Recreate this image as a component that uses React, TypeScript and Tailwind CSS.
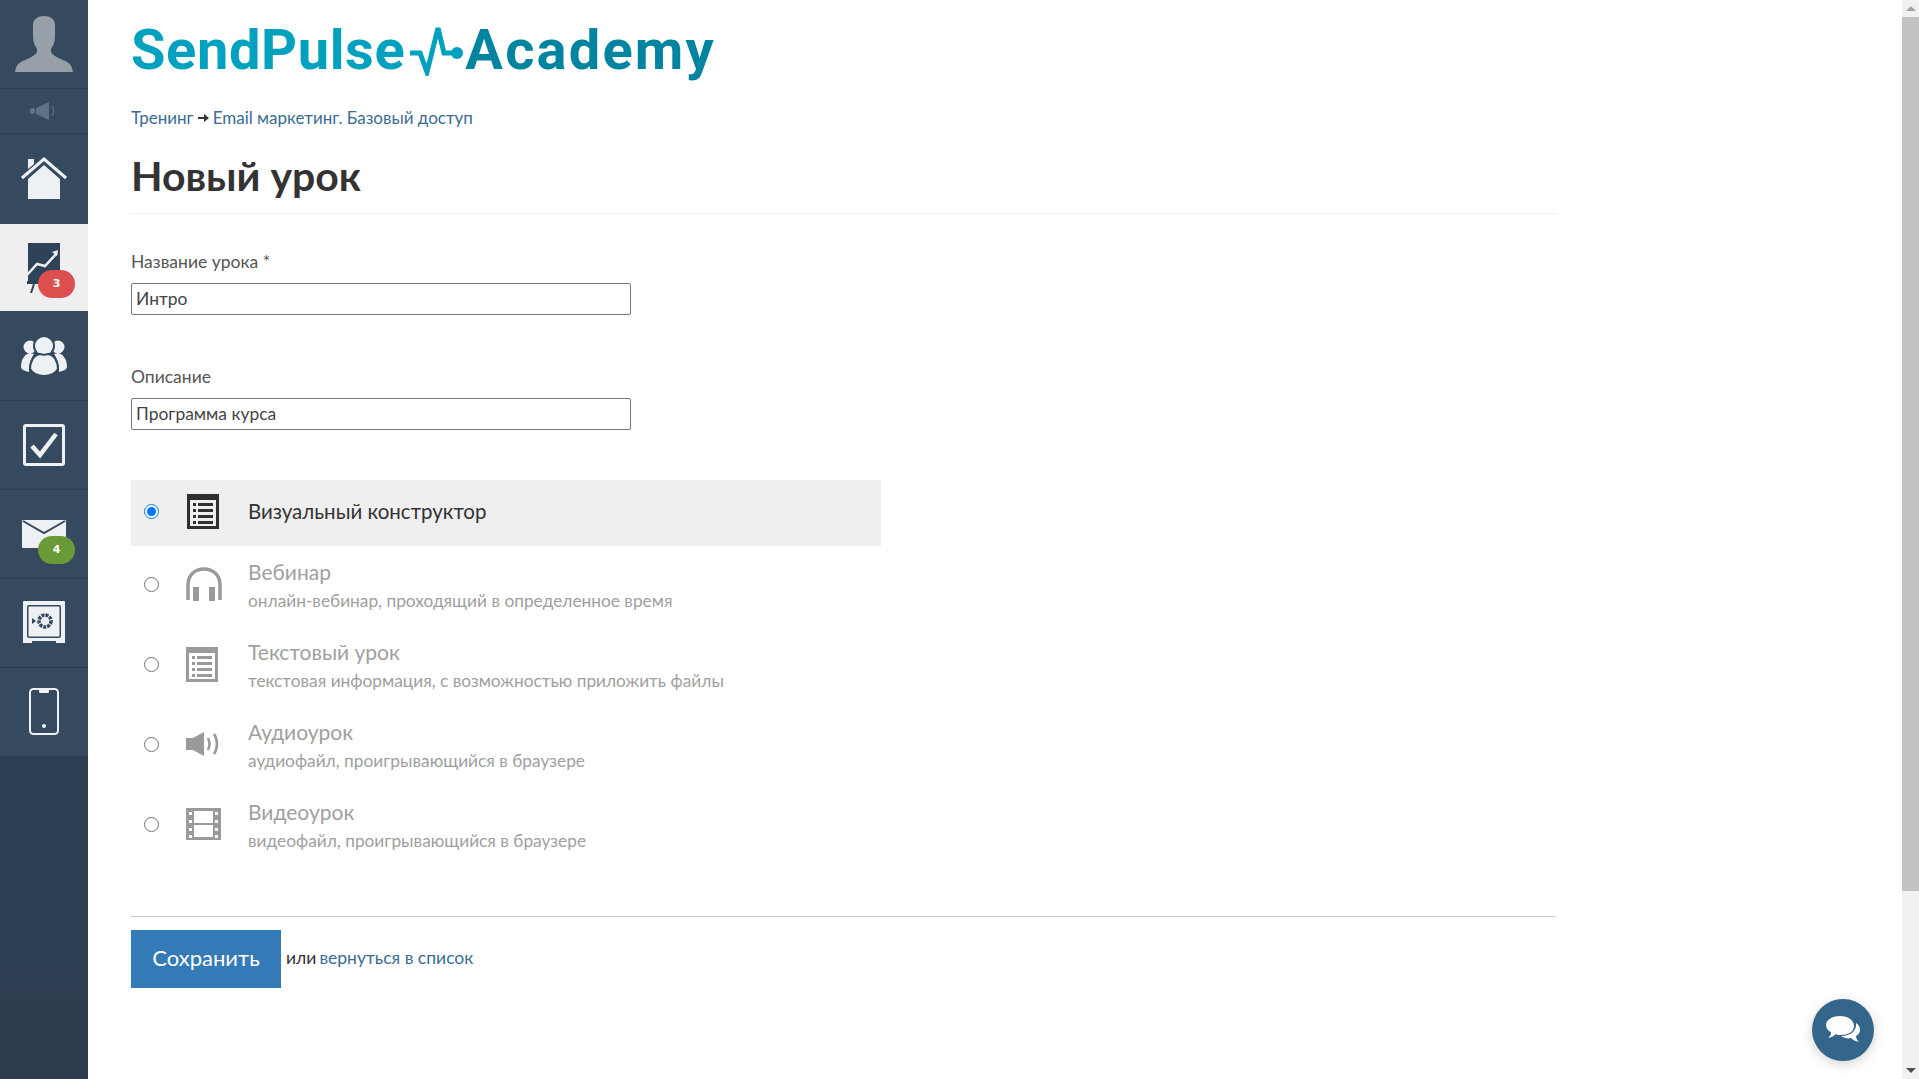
import type { ReactNode } from "react";

const FONT = "font-['Lato','Noto_Sans','Liberation_Sans',sans-serif]";

function Avatar() {
  return (
    <svg width="58" height="56" viewBox="0 0 58 56" fill="#97a0a9">
      <path d="M18 9C18 3 23 0 29 0s11 3 11 9v12c0 5-2 9-4 12v3c2 4 8 6 14 9 5 2 7 5 8 11H0c1-6 3-9 8-11 6-3 12-5 14-9v-3c-2-3-4-7-4-12z" />
    </svg>
  );
}

function Speaker() {
  return (
    <svg width="28" height="18" viewBox="0 0 28 18" fill="#5d7287">
      <rect x="0" y="6" width="5" height="6" rx="2" />
      <path d="M6 6 19 0v18L6 12z" />
      <path d="M22 4c2 3 2 7 0 10" fill="none" stroke="#5d7287" strokeWidth="1.2" />
    </svg>
  );
}

function Home() {
  return (
    <svg width="46" height="42" viewBox="0 0 46 42" fill="#eef1f3">
      <path d="M7 2h6v5L7 12z" />
      <path d="M1 21 23 2l22 19" fill="none" stroke="#eef1f3" strokeWidth="3" />
      <path d="M7 22 23 8l16 14v20H7z" />
    </svg>
  );
}

function Board() {
  return (
    <svg width="34" height="50" viewBox="0 0 34 50">
      <rect x="1" y="0" width="32" height="38" fill="#2f4358" />
      <path d="M0 32 10 21l8 2L30 10" fill="none" stroke="#eef1f3" strokeWidth="2.5" />
      <path d="M25 9l6-2-1 6z" fill="#eef1f3" />
      <rect x="0" y="38" width="34" height="3" fill="#2f4358" />
      <path d="M7 41 4 50M18 41v8" stroke="#2f4358" strokeWidth="2" />
    </svg>
  );
}

function Users() {
  return (
    <svg width="46" height="40" viewBox="0 0 46 40" fill="#eef1f3">
      <circle cx="9" cy="11" r="6.5" />
      <circle cx="37" cy="11" r="6.5" />
      <path d="M0 31c0-8 4-13 9-14l4 1c-3 4-5 10-5 18-5-1-8-3-8-5zM46 31c0-8-4-13-9-14l-4 1c3 4 5 10 5 18 5-1 8-3 8-5z" />
      <circle cx="23" cy="10" r="10" stroke="#35495f" strokeWidth="2" />
      <path d="M9 33c0-8 4-14 10-15 3 1 5 1 8 0 6 1 10 7 10 15-3 5-9 7-14 7s-11-2-14-7z" stroke="#35495f" strokeWidth="2" />
    </svg>
  );
}

function CheckBox() {
  return (
    <svg width="42" height="42" viewBox="0 0 42 42" fill="none">
      <rect x="1.5" y="1.5" width="39" height="39" rx="1.5" stroke="#eef1f3" strokeWidth="3" />
      <path d="M9 22l8 9L33 10" stroke="#eef1f3" strokeWidth="4.5" />
    </svg>
  );
}

function Mail() {
  return (
    <svg width="44" height="28" viewBox="0 0 44 28">
      <rect x="0" y="0" width="44" height="28" rx="1" fill="#eef1f3" />
      <path d="M1 1l21 12L43 1" fill="none" stroke="#34495e" strokeWidth="2" />
    </svg>
  );
}

function Safe() {
  return (
    <svg width="42" height="44" viewBox="0 0 42 44" fill="none">
      <path d="M1 0h40a1 1 0 0 1 1 1v41H33v-2H9v2H0V1a1 1 0 0 1 1-1z" fill="#eef1f3" />
      <rect x="4" y="4" width="34" height="33" rx="2" fill="#34495e" />
      <rect x="5" y="5" width="32" height="31" rx="1.5" fill="#eef1f3" stroke="#34495e" />
      <circle cx="22" cy="20" r="6" stroke="#34495e" strokeWidth="3.5" strokeDasharray="3 1" />
      <path d="M9 17l4 3-4 3z" fill="#34495e" />
    </svg>
  );
}

function Phone() {
  return (
    <svg width="30" height="47" viewBox="0 0 30 47" fill="none">
      <rect x="1" y="1" width="28" height="45" rx="3.5" stroke="#eef1f3" strokeWidth="2" />
      <rect x="10" y="1" width="10" height="4" rx="1" fill="#eef1f3" />
      <circle cx="15" cy="38" r="2" fill="#eef1f3" />
    </svg>
  );
}

function ListIcon({ color, dark }: { color: string; dark?: boolean }) {
  const bg = dark ? "#efefef" : "#ffffff";
  const rows = [9, 15, 21, 27];
  return (
    <svg width="32" height="35" viewBox="0 0 32 35">
      <rect width="32" height="35" fill={color} />
      <rect x="3" y="6" width="26" height="26" fill={bg} />
      {rows.map((y) => (
        <g key={y} fill={color}>
          <rect x="6" y={y} width="3" height="3" />
          <rect x="11" y={y} width="15" height="3" />
        </g>
      ))}
    </svg>
  );
}

function Headphones() {
  return (
    <svg width="36" height="35" viewBox="0 0 36 35" fill="#9a9a9a">
      <path d="M2 33V18C2 8 9 2 18 2s16 6 16 16v15" fill="none" stroke="#9a9a9a" strokeWidth="3.5" />
      <rect x="7" y="20" width="6" height="14" />
      <rect x="23" y="20" width="6" height="14" />
    </svg>
  );
}

function Sound() {
  return (
    <svg width="34" height="24" viewBox="0 0 34 24" fill="#9a9a9a">
      <path d="M0 6h7l11-6v24L7 18H0z" />
      <path d="M22 6c2 4 2 8 0 12" fill="none" stroke="#9a9a9a" strokeWidth="2.6" />
      <path d="M28 2c4 6 4 14 0 20" fill="none" stroke="#9a9a9a" strokeWidth="2.6" />
    </svg>
  );
}

function Film() {
  const holes = [4, 12, 20, 27];
  return (
    <svg width="35" height="32" viewBox="0 0 35 32">
      <rect width="35" height="32" fill="#9a9a9a" />
      <rect x="8" y="3" width="19" height="12" fill="#fff" />
      <rect x="8" y="17" width="19" height="12" fill="#fff" />
      {holes.map((y) => (
        <g key={y} fill="#fff">
          <rect x="3" y={y} width="3" height="3" />
          <rect x="29" y={y} width="3" height="3" />
        </g>
      ))}
    </svg>
  );
}

function Pulse() {
  return (
    <svg width="60" height="52" viewBox="0 0 60 52" fill="none">
      <path d="M5 29h10l7 19L33 4l6 25h13" stroke="#00a0bf" strokeWidth="5" />
      <circle cx="52" cy="29" r="6" fill="#00a0bf" />
    </svg>
  );
}

function NavItem({
  h,
  active,
  border,
  children,
  badge,
}: {
  h: string;
  active?: boolean;
  border?: boolean;
  children: ReactNode;
  badge?: ReactNode;
}) {
  return (
    <div
      className={`relative flex items-center justify-center ${h} ${
        active ? "bg-[#efefef]" : "bg-[#35495f]"
      } ${border ? "border-b border-[#2d3e50]" : ""}`}
    >
      {children}
      {badge}
    </div>
  );
}

function Badge({ n, color }: { n: number; color: string }) {
  return (
    <span
      className={`absolute left-[38px] top-[46px] flex h-[28px] w-[37px] items-center justify-center rounded-full font-['DejaVu_Sans',sans-serif] text-[11px] font-bold text-white ${color}`}
    >
      {n}
    </span>
  );
}

const lessonTypes = [
  { title: "Вебинар", sub: "онлайн-вебинар, проходящий в определенное время", icon: <Headphones /> },
  { title: "Текстовый урок", sub: "текстовая информация, с возможностью приложить файлы", icon: <ListIcon color="#9a9a9a" /> },
  { title: "Аудиоурок", sub: "аудиофайл, проигрывающийся в браузере", icon: <Sound /> },
  { title: "Видеоурок", sub: "видеофайл, проигрывающийся в браузере", icon: <Film /> },
];

export default function App() {
  return (
    <div className={`flex h-screen overflow-hidden bg-white text-[#333] ${FONT}`}>
      <aside className="flex w-[88px] shrink-0 flex-col bg-gradient-to-b from-[#2f4256] to-[#2b3d4f]">
        <NavItem h="h-[89px]" border>
          <Avatar />
        </NavItem>
        <NavItem h="h-[45px]" border>
          <Speaker />
        </NavItem>
        <NavItem h="h-[90px]">
          <span className="-mt-[2px]">
            <Home />
          </span>
        </NavItem>
        <NavItem h="h-[87px]" active badge={<Badge n={3} color="bg-[#dc4f4f]" />}>
          <Board />
        </NavItem>
        <NavItem h="h-[90px]" border>
          <Users />
        </NavItem>
        <NavItem h="h-[89px]" border>
          <CheckBox />
        </NavItem>
        <NavItem h="h-[89px]" border badge={<Badge n={4} color="bg-[#6a9a37]" />}>
          <Mail />
        </NavItem>
        <NavItem h="h-[89px]" border>
          <Safe />
        </NavItem>
        <NavItem h="h-[88px]">
          <span className="-mt-[2px]">
            <Phone />
          </span>
        </NavItem>
      </aside>

      <main className="min-w-0 flex-1 pl-[43px]">
        <div className="w-[1425px]">
          <div className="flex h-[90px] items-center pt-[9px] font-['Roboto',sans-serif] text-[56px] leading-none font-bold">
            <span className="tracking-[0.6px] text-[#00a0bf]">SendPulse</span>
            <Pulse />
            <span className="tracking-[2.2px] text-[#00849f]">Academy</span>
          </div>

          <div className="mt-[17px] flex h-[22px] items-center text-[17px] text-[#3a6c96]">
            <span>Тренинг</span>
            <svg width="11" height="8" viewBox="0 0 11 8" className="mx-[4px]">
              <path d="M0 3h6V0l5 4-5 4V5H0z" fill="#333" />
            </svg>
            <span>Email маркетинг. Базовый доступ</span>
          </div>

          <h1 className="mt-[20px] h-[64px] text-[41px] leading-[54px] font-bold text-[#333]">Новый урок</h1>
          <div className="border-t border-[#eee]" />

          <label className="mt-[37px] block h-[22px] text-[17.5px] leading-[22px] text-[#555]">Название урока *</label>
          <input
            readOnly
            value="Интро"
            className="mt-[10px] block h-[32px] w-[500px] rounded-[2px] border border-[#767676] px-[4px] pb-[1px] text-[17.4px] text-[#444]"
          />

          <label className="mt-[51px] block h-[22px] text-[17.5px] leading-[22px] text-[#555]">Описание</label>
          <input
            readOnly
            value="Программа курса"
            className="mt-[10px] block h-[32px] w-[500px] rounded-[2px] border border-[#767676] px-[4px] pb-[1px] text-[17.4px] text-[#444]"
          />

          <div className="mt-[50px] w-[750px]">
            <div className="flex h-[66px] items-center bg-[#efefef] pb-[3px]">
              <input type="radio" name="kind" defaultChecked className="ml-[13px] h-[15px] w-[15px]" />
              <span className="ml-[28px] flex w-[61px] justify-start">
                <ListIcon color="#2f2f2f" dark />
              </span>
              <span className="text-[20.5px] text-[#333]">Визуальный конструктор</span>
            </div>
            <div className="-mt-[2px]">
              {lessonTypes.map((t) => (
                <div key={t.title} className="flex h-[80px] items-center">
                  <input type="radio" name="kind" className="ml-[13px] h-[15px] w-[15px]" />
                  <span className="ml-[27px] flex w-[62px] justify-start">{t.icon}</span>
                  <div className="pt-[3px] text-[#a0a0a0]">
                    <div className="text-[21px] leading-[30px]">{t.title}</div>
                    <div className="text-[17.3px] leading-[27px]">{t.sub}</div>
                  </div>
                </div>
              ))}
            </div>
          </div>

          <div className="mt-[52px] border-t border-[#ccc]" />
          <div className="mt-[13px] flex items-center">
            <button className="h-[58px] w-[150px] bg-[#337ab7] pb-[3px] text-[22px] text-white">Сохранить</button>
            <span className="mb-[2px] ml-[5px] text-[17.5px] text-[#333]">или</span>
            <span className="mb-[2px] ml-[3px] text-[17.5px] text-[#3a6c96]">вернуться в список</span>
          </div>
        </div>
      </main>

      <div className="relative flex w-[17px] shrink-0 flex-col bg-[#f1f1f1]">
        <div className="flex h-[17px] items-center justify-center">
          <div className="h-0 w-0 border-x-[5px] border-b-[5px] border-x-transparent border-b-[#a3a3a3]" />
        </div>
        <div className="h-[874px] bg-[#c1c1c1]" />
        <div className="mt-auto flex h-[17px] items-center justify-center">
          <div className="h-0 w-0 border-x-[5px] border-t-[5px] border-x-transparent border-t-[#505050]" />
        </div>
      </div>

      <div className="absolute left-[1812px] top-[999px] flex h-[62px] w-[62px] items-center justify-center rounded-full bg-[#34658a] shadow-[0_3px_12px_rgba(0,0,0,0.18)]">
        <svg width="34" height="28" viewBox="0 0 34 28" fill="#fff">
          <path d="M14 0c8 0 14 4 14 10s-6 9-14 9c-2 0-3 0-4-1-2 2-4 3-8 4 2-2 3-3 3-6-3-1-5-4-5-7C0 4 6 0 14 0z" />
          <path d="M30 7c3 2 4 4 4 7 0 3-2 5-4 6 0 2 1 4 3 6-4-1-6-2-8-4-3 1-7 0-10-2 8 0 16-4 15-13z" />
        </svg>
      </div>
    </div>
  );
}
